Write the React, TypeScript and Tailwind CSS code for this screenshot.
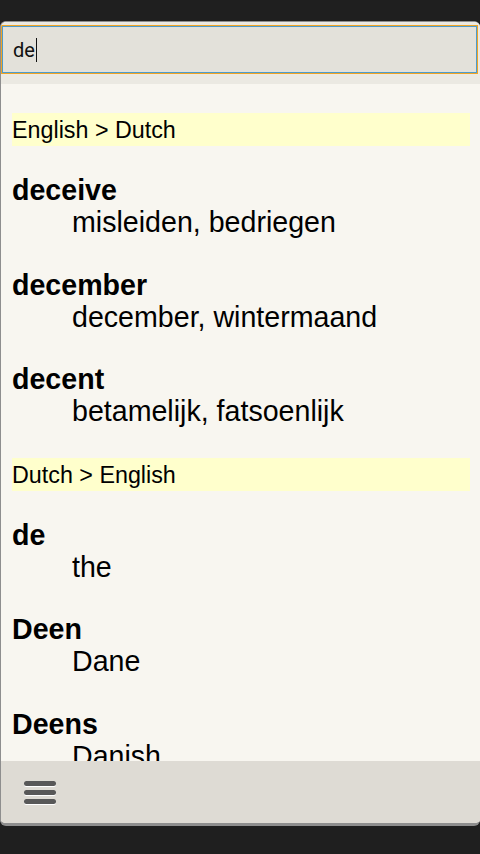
import React from "react";

interface Entry {
  word: string;
  translation: string;
}

interface Section {
  title: string;
  entries: Entry[];
}

const sections: Section[] = [
  {
    title: "English > Dutch",
    entries: [
      { word: "deceive", translation: "misleiden, bedriegen" },
      { word: "december", translation: "december, wintermaand" },
      { word: "decent", translation: "betamelijk, fatsoenlijk" },
    ],
  },
  {
    title: "Dutch > English",
    entries: [
      { word: "de", translation: "the" },
      { word: "Deen", translation: "Dane" },
      { word: "Deens", translation: "Danish" },
    ],
  },
];

const MenuIcon = () => (
  <div className="flex flex-col gap-[4px]">
    {[0, 1, 2].map((i) => (
      <div
        key={i}
        className="h-[5px] w-[32px] rounded-full bg-[#585858] shadow-[0_1px_0_#ffffff]"
      />
    ))}
  </div>
);

export default function App() {
  return (
    <div className="flex h-[854px] w-[480px] flex-col bg-[#1f1f1f] pt-[21px] pb-[28px]">
      <div className="flex flex-1 flex-col overflow-hidden rounded-[6px] border-l border-t border-b-[3px] border-[#8e8e8e] bg-[#f8f6f0]">
        {/* search field */}
        <div className="bg-[#ebe9e2] pt-[3px] pb-[10px] pl-0 pr-[2px]">
          <div className="flex h-[49px] items-center border border-[#f0a424] bg-[#e3e1da] pl-[11px] shadow-[inset_0_0_0_1px_#4d9ccc]">
            <span className="text-[20px] text-[#111]" style={{ fontFamily: "Roboto, sans-serif" }}>
              de
            </span>
            <span className="ml-[1px] h-[24px] w-[1.5px] bg-[#111]" />
          </div>
        </div>

        {/* results */}
        <div
          className="flex-1 overflow-hidden pl-[11px] pr-[10px] pt-[29px] text-black"
          style={{ fontFamily: '"Liberation Sans", Arial, sans-serif' }}
        >
          {sections.map((section, si) => (
            <div key={section.title} className={si > 0 ? "mt-[30px]" : ""}>
              <div className="h-[33px] bg-[#ffffcc] pt-[2px] text-[23.3px] leading-[31px]">{section.title}</div>
              {section.entries.map((entry, ei) => (
                <div key={entry.word} className={ei === 0 ? "mt-[28px]" : "mt-[30px]"}>
                  <div className="text-[28.6px] font-bold leading-[32px]">{entry.word}</div>
                  <div className="pl-[60px] text-[28.6px] leading-[32.5px]">{entry.translation}</div>
                </div>
              ))}
            </div>
          ))}
        </div>

        {/* bottom bar */}
        <div className="flex h-[62px] items-center bg-[#dedbd4] pl-[23px]">
          <MenuIcon />
        </div>
      </div>
    </div>
  );
}
